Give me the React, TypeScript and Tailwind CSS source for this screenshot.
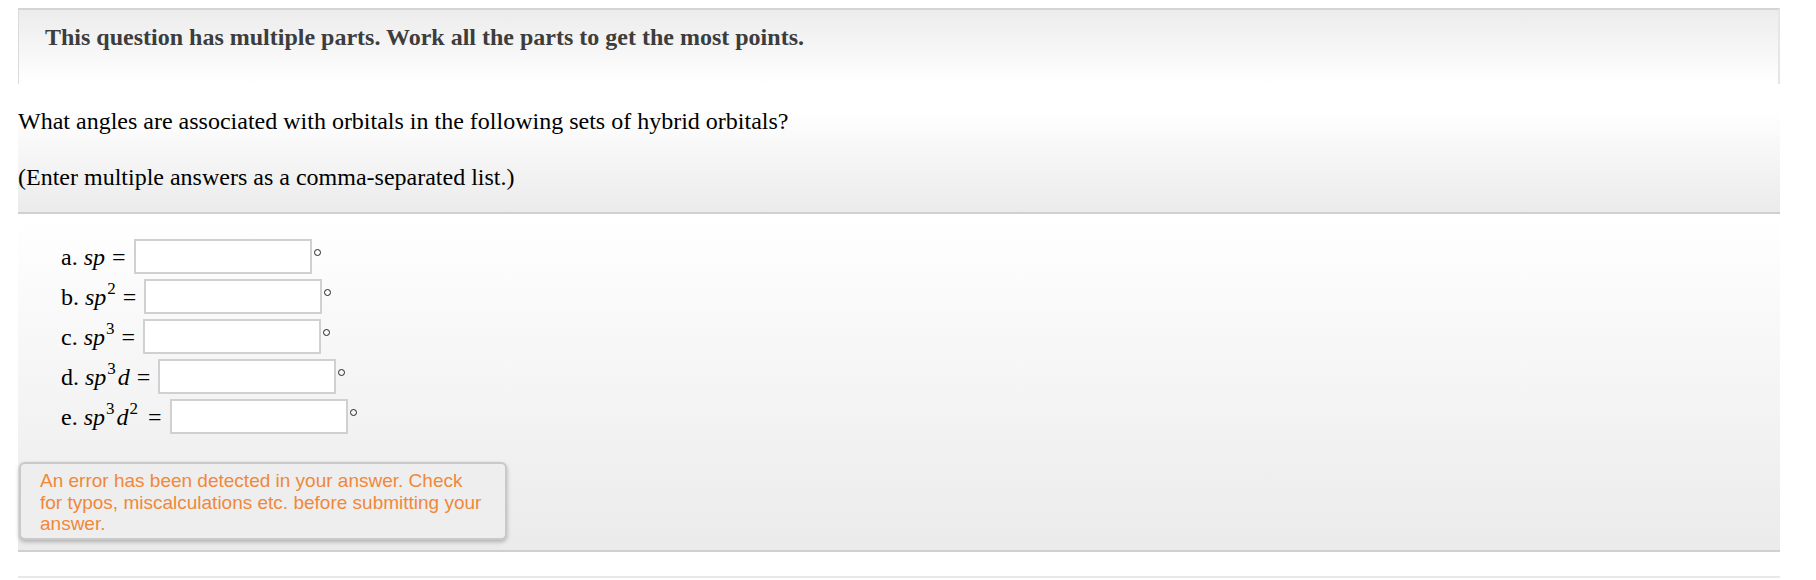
import React from "react";

const serif = "font-['Liberation_Serif','Times_New_Roman',serif]";

function Degree() {
  return <span className="ml-[2px] mt-[10px] self-start w-[7px] h-[7px] rounded-full border-[1.5px] border-[#222]" />;
}

function AnswerRow({ letter, children }: { letter: string; children: React.ReactNode }) {
  return (
    <div className="flex items-center h-[35px]">
      <div className={`${serif} text-[24px] leading-none text-black flex items-baseline`}>
        <span>{letter}.</span>
        <span className="ml-[6px] flex items-baseline">{children}</span>
        <span className="ml-[7px] mr-[8px]">=</span>
      </div>
      <div className="w-[178px] h-[35px] bg-white border-2 border-[#d0d0d0]" />
      <Degree />
    </div>
  );
}

function Sup({ n, extra = "" }: { n: string; extra?: string }) {
  return <span className={`text-[17px] relative -top-[11px] ml-[1px] ${extra}`}>{n}</span>;
}

export default function App() {
  return (
    <div className="min-h-[580px] bg-white pt-[8px] pl-[18px]">
      <div className="w-[1762px]">
        {/* notice header */}
        <div className="h-[76px] border-t-2 border-t-[#d4d4d4] border-l border-l-[#dadada] border-r-2 border-r-[#e6e6e6] bg-gradient-to-b from-[#ececec] to-white pl-[26px] pt-[13px]">
          <p className={`${serif} font-bold text-[24px] leading-[28px] text-[#3d3d3d]`}>
            This question has multiple parts. Work all the parts to get the most points.
          </p>
        </div>

        {/* question */}
        <div className="h-[130px] border-b-2 border-b-[#d0d0d0] bg-gradient-to-b from-white from-20% to-[#ebebeb] pt-[23px]">
          <p className={`${serif} text-[24px] leading-[28px] text-black`}>
            What angles are associated with orbitals in the following sets of hybrid orbitals?
          </p>
          <p className={`${serif} text-[24px] leading-[28px] text-black mt-[28px]`}>
            (Enter multiple answers as a comma-separated list.)
          </p>
        </div>

        {/* answers */}
        <div className="h-[338px] border-b-2 border-b-[#d0d0d0] bg-gradient-to-b from-white to-[#ebebeb] pt-[25px]">
          <div className="pl-[43px] flex flex-col gap-[5px]">
            <AnswerRow letter="a">
              <i>sp</i>
            </AnswerRow>
            <AnswerRow letter="b">
              <i>sp</i>
              <Sup n="2" />
            </AnswerRow>
            <AnswerRow letter="c">
              <i>sp</i>
              <Sup n="3" />
            </AnswerRow>
            <AnswerRow letter="d">
              <i>sp</i>
              <Sup n="3" />
              <i className="ml-[2px]">d</i>
            </AnswerRow>
            <AnswerRow letter="e">
              <i>sp</i>
              <Sup n="3" />
              <i className="ml-[2px]">d</i>
              <Sup n="2" extra="mr-[3px]" />
            </AnswerRow>
          </div>

          <div className="mt-[28px] ml-[1px] w-[488px] h-[78px] rounded-[6px] border-2 border-[#c9c9c9] bg-[#eeeeee] shadow-[0_2px_4px_rgba(0,0,0,0.25)] pl-[19px] pt-[6px]">
            <p className="w-[446px] font-['Liberation_Sans',Arial,sans-serif] text-[19px] leading-[21.7px] text-[#f0883a]">
              An error has been detected in your answer. Check for typos, miscalculations etc. before
              submitting your answer.
            </p>
          </div>
        </div>

        <div className="mt-[24px] border-t-2 border-t-[#e8e8e8]" />
      </div>
    </div>
  );
}
